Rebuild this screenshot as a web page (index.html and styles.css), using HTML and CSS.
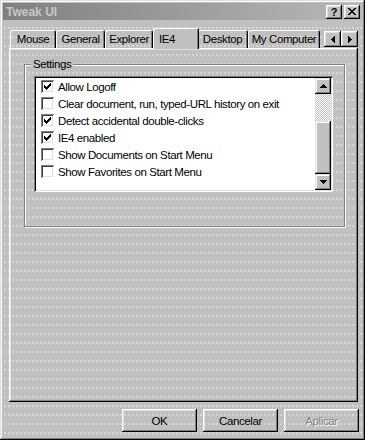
FILE: index.html
```html
<!DOCTYPE html>
<html>
<head>
<meta charset="utf-8">
<link rel="stylesheet" href="styles.css">
</head>
<body>
<div class="window">
  <div class="titlebar">
    <span class="title">Tweak UI</span>
    <div class="tb-btns">
      <span class="tb-btn help">?</span>
      <span class="tb-btn close"><svg width="8" height="7" viewBox="0 0 8 7" shape-rendering="crispEdges"><path d="M0 0h2v1h1v1h2v-1h1v-1h2v1h-1v1h-1v1h-1v1h1v1h1v1h1v1h-2v-1h-1v-1h-2v1h-1v1h-2v-1h1v-1h1v-1h1v-1h-1v-1h-1z" fill="#000"/></svg></span>
    </div>
  </div>
  <div class="tabs">
    <div class="tab t-mouse">Mouse</div>
    <div class="tab t-general">General</div>
    <div class="tab t-explorer">Explorer</div>
    <div class="tab active">IE4</div>
    <div class="tab t-desktop">Desktop</div>
    <div class="tab t-mycomp">My Computer</div>
    <div class="tab-scroll">
      <span class="arrow-btn"><svg width="4" height="7" viewBox="0 0 4 7" shape-rendering="crispEdges"><path d="M3 0h1v7h-1v-1h-1v-1h-1v-1h-1v-1h1v-1h1v-1h1z" fill="#000"/></svg></span>
      <span class="arrow-btn"><svg width="4" height="7" viewBox="0 0 4 7" shape-rendering="crispEdges"><path d="M0 0h1v1h1v1h1v1h1v1h-1v1h-1v1h-1v1h-1z" fill="#000"/></svg></span>
    </div>
  </div>
  <div class="panel">
    <div class="group">
      <span class="legend">Settings</span>
      <div class="listbox">
        <ul class="items">
          <li class="item"><span class="cb checked"><svg width="7" height="7" viewBox="0 0 7 7" shape-rendering="crispEdges"><path d="M6 0h1v3h-1v1h-1v1h-1v1h-1v1h-1v-1h-1v-1h-1v-3h1v1h1v1h1v-1h1v-1h1v-1h1z" fill="#000"/></svg></span><span>Allow Logoff</span></li>
          <li class="item"><span class="cb"></span><span>Clear document, run, typed-URL history on exit</span></li>
          <li class="item"><span class="cb checked"><svg width="7" height="7" viewBox="0 0 7 7" shape-rendering="crispEdges"><path d="M6 0h1v3h-1v1h-1v1h-1v1h-1v1h-1v-1h-1v-1h-1v-3h1v1h1v1h1v-1h1v-1h1v-1h1z" fill="#000"/></svg></span><span>Detect accidental double-clicks</span></li>
          <li class="item"><span class="cb checked"><svg width="7" height="7" viewBox="0 0 7 7" shape-rendering="crispEdges"><path d="M6 0h1v3h-1v1h-1v1h-1v1h-1v1h-1v-1h-1v-1h-1v-3h1v1h1v1h1v-1h1v-1h1v-1h1z" fill="#000"/></svg></span><span>IE4 enabled</span></li>
          <li class="item"><span class="cb"></span><span>Show Documents on Start Menu</span></li>
          <li class="item"><span class="cb"></span><span>Show Favorites on Start Menu</span></li>
        </ul>
        <div class="scrollbar">
          <div class="sb-btn"><svg width="7" height="4" viewBox="0 0 7 4" shape-rendering="crispEdges"><path d="M3 0h1v1h1v1h1v1h1v1h-7v-1h1v-1h1v-1h1z" fill="#000"/></svg></div>
          <div class="track"><div class="thumb"></div></div>
          <div class="sb-btn"><svg width="7" height="4" viewBox="0 0 7 4" shape-rendering="crispEdges"><path d="M0 0h7v1h-1v1h-1v1h-1v1h-1v-1h-1v-1h-1v-1h-1z" fill="#000"/></svg></div>
        </div>
      </div>
    </div>
  </div>
  <div class="buttons">
    <button class="btn">OK</button>
    <button class="btn">Cancelar</button>
    <button class="btn disabled">Aplicar</button>
  </div>
</div>
</body>
</html>
```
FILE: styles.css
```css
html, body {
  margin: 0;
  padding: 0;
  background: #c0c0c0;
}
.window {
  width: 365px;
  height: 440px;
  box-sizing: border-box;
  padding: 3px;
  background-color: #c0c0c0;
  background-image: radial-gradient(circle at 1px 1px, #e2e2e2 0.6px, transparent 0.9px);
  background-size: 4px 9px;
  box-shadow: inset -1px -1px #000, inset 1px 1px #dfdfdf, inset -2px -2px #808080, inset 2px 2px #fff;
  font-family: "Liberation Sans", Arial, sans-serif;
  font-size: 11.5px;
  letter-spacing: -0.4px;
  color: #000;
  overflow: hidden;
}
.titlebar {
  height: 17px;
  display: flex;
  align-items: center;
  justify-content: space-between;
  padding: 0 2px 0 3px;
  background: linear-gradient(90deg, #808080, #b8b8b8);
}
.title {
  font-weight: bold;
  font-size: 12px;
  letter-spacing: 0;
  color: #c8c8c8;
}
.tb-btns {
  display: flex;
  gap: 2px;
}
.tb-btn {
  width: 16px;
  height: 14px;
  box-sizing: border-box;
  display: flex;
  align-items: center;
  justify-content: center;
  background: #c0c0c0;
  box-shadow: inset -1px -1px #000, inset 1px 1px #fff, inset -2px -2px #808080, inset 2px 2px #dfdfdf;
}
.help {
  font-weight: bold;
  font-size: 11px;
  letter-spacing: 0;
  line-height: 14px;
}
.tabs {
  display: flex;
  align-items: flex-start;
  height: 20px;
  margin: 8px 4px 0 7px;
}
.tab {
  box-sizing: border-box;
  height: 18px;
  margin-top: 2px;
  line-height: 18px;
  text-align: center;
  white-space: nowrap;
  border-radius: 2px 2px 0 0;
  box-shadow: inset 1px 1px #fff, inset -1px 0 #000, inset -2px 0 #808080;
  flex-shrink: 0;
}
.t-mouse { width: 46px; }
.t-general { width: 49px; }
.t-explorer { width: 48px; }
.t-desktop { width: 51px; }
.t-mycomp { width: 72px; }
.tab.active {
  width: 46px;
  height: 21px;
  margin-top: 0;
  margin-right: -2px;
  line-height: 22px;
  text-align: left;
  padding-left: 6px;
  position: relative;
  z-index: 2;
  background: #c0c0c0;
}
.tab-scroll {
  margin-left: auto;
  margin-top: 3px;
  display: flex;
}
.arrow-btn {
  width: 17px;
  height: 16px;
  display: flex;
  align-items: center;
  justify-content: center;
  background: #c0c0c0;
  box-shadow: inset -1px -1px #000, inset 1px 1px #fff, inset -2px -2px #808080, inset 2px 2px #dfdfdf;
}
.panel {
  height: 354px;
  box-sizing: border-box;
  margin: 0 4px 0 6px;
  padding: 16px 13px 0 15px;
  box-shadow: inset -1px -1px #000, inset 1px 1px #fff, inset -2px -2px #808080, inset 2px 2px #dfdfdf;
}
.group {
  position: relative;
  height: 163px;
  box-sizing: border-box;
  border: 1px solid #808080;
  box-shadow: inset 1px 1px #fff, 1px 1px #fff;
  padding: 11px 11px 0 9px;
}
.legend {
  position: absolute;
  top: -8px;
  left: 6px;
  padding: 0 2px;
  background: #c0c0c0;
  line-height: 15px;
}
.listbox {
  height: 116px;
  box-sizing: border-box;
  padding: 2px;
  display: flex;
  background: #fff;
  box-shadow: inset 1px 1px #808080, inset -1px -1px #fff, inset 2px 2px #000, inset -2px -2px #dfdfdf;
}
.items {
  flex: 1;
  list-style: none;
  margin: 0;
  padding: 0;
  overflow: hidden;
}
.item {
  height: 17px;
  display: flex;
  align-items: center;
  gap: 4px;
  padding-left: 5px;
  white-space: nowrap;
}
.cb {
  width: 13px;
  height: 13px;
  box-sizing: border-box;
  flex-shrink: 0;
  background: #fff;
  display: flex;
  align-items: center;
  justify-content: center;
  box-shadow: inset 1px 1px #808080, inset -1px -1px #fff, inset 2px 2px #404040, inset -2px -2px #dfdfdf;
}
.scrollbar {
  width: 16px;
  display: flex;
  flex-direction: column;
}
.sb-btn {
  height: 16px;
  flex-shrink: 0;
  display: flex;
  align-items: center;
  justify-content: center;
  background: #c0c0c0;
  box-shadow: inset -1px -1px #000, inset 1px 1px #dfdfdf, inset -2px -2px #808080, inset 2px 2px #fff;
}
.track {
  flex: 1;
  display: flex;
  flex-direction: column;
  justify-content: flex-end;
  background: conic-gradient(#fff 25%, #c0c0c0 0 50%, #fff 0 75%, #c0c0c0 0);
  background-size: 2px 2px;
}
.thumb {
  height: 53px;
  background-color: #c0c0c0;
  box-shadow: inset -1px -1px #000, inset 1px 1px #dfdfdf, inset -2px -2px #808080, inset 2px 2px #fff;
}
.buttons {
  display: flex;
  justify-content: flex-end;
  gap: 6px;
  margin: 7px 3px 0 0;
}
.btn {
  width: 75px;
  height: 23px;
  padding: 0;
  border: none;
  background: transparent;
  font: inherit;
  letter-spacing: inherit;
  color: #000;
  box-shadow: inset -1px -1px #000, inset 1px 1px #fff, inset -2px -2px #808080, inset 2px 2px #dfdfdf;
}
.btn.disabled {
  color: #808080;
  text-shadow: 1px 1px #fff;
}
```
